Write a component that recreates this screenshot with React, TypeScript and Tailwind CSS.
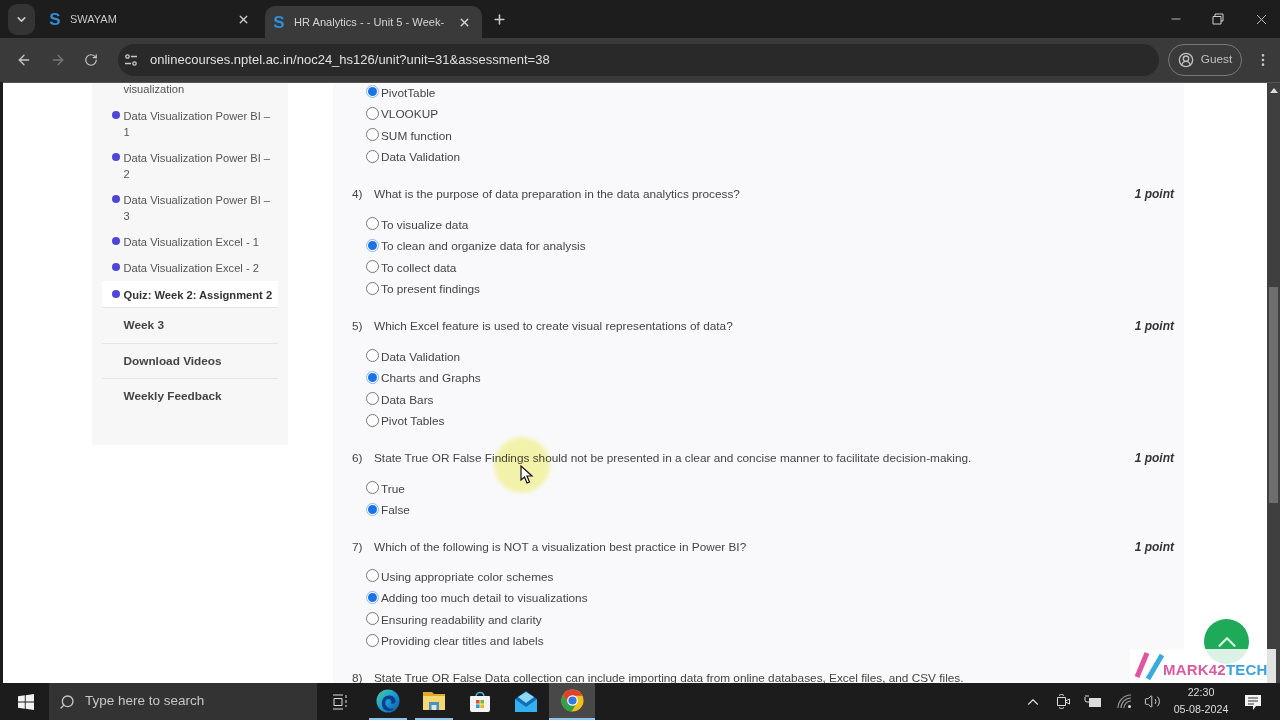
import React from 'react'
import { ChevronDown, X, Plus, ArrowLeft, ArrowRight, RotateCw, CircleUserRound, EllipsisVertical, Minus, ChevronUp, Search, Volume2 } from 'lucide-react'

const sans = 'font-["Liberation_Sans",Arial,sans-serif]'

function Radio({ checked }: { checked?: boolean }) {
  if (checked) {
    return (
      <span className="flex h-[13px] w-[13px] -translate-y-[2px] items-center justify-center rounded-full border border-[#8ab8ee] bg-white">
        <span className="h-[9px] w-[9px] rounded-full bg-[#1a73e8]" />
      </span>
    )
  }
  return <span className="h-[13px] w-[13px] -translate-y-[2px] rounded-full border border-[#767676] bg-white" />
}

function Question({ num, text, options, checked, last, tight }: { num?: number; text?: string; options: string[]; checked: number; last?: boolean; tight?: boolean }) {
  return (
    <div className="mb-[16px]">
      {num && (
        <div className={`flex h-[20px] items-center pl-[19px] pr-[10px] text-[#444] ${tight ? 'mb-[9px]' : 'mb-[10px]'}`}>
          <span className="w-[22px]">{num})</span>
          <span className="flex-1">{text}</span>
          {!last && <span className="-translate-y-[1px] text-[12px] font-bold italic text-[#333]">1 point</span>}
        </div>
      )}
      {options.map((o, i) => (
        <div key={o} className="flex h-[21.5px] items-center gap-[2px] pl-[33px] text-[#444]">
          <Radio checked={i === checked} />
          <span>{o}</span>
        </div>
      ))}
    </div>
  )
}

function Lesson({ lines, bold }: { lines: string[]; bold?: boolean }) {
  return (
    <div className={`relative leading-[16px] ${bold ? 'mx-[10px] bg-white pb-[4px] pl-[21.500px] pt-[6px] font-bold whitespace-nowrap text-[#333]' : 'py-[5px] pl-[31.500px] text-[#555]'}`}>
      <span className={`absolute h-[8px] w-[8px] rounded-full bg-[#4f46d8] ${bold ? 'left-[10px] top-[9px]' : 'left-[20px] top-[8px]'}`} />
      {lines.map((l) => (
        <div key={l}>{l}</div>
      ))}
    </div>
  )
}

function SwayamIcon() {
  return <span className="w-[16px] text-center font-['Liberation_Sans'] text-[17px] font-bold leading-none text-[#2f8fd8]">S</span>
}

function Edge() {
  return (
    <svg width="24" height="24" viewBox="0 0 24 24">
      <defs>
        <linearGradient id="edge" x1="0" y1="0" x2="1" y2="1">
          <stop offset="0" stopColor="#46cf9a" />
          <stop offset="0.5" stopColor="#1b9ad6" />
          <stop offset="1" stopColor="#0c56a8" />
        </linearGradient>
      </defs>
      <circle cx="12" cy="12" r="11.500" fill="url(#edge)" />
      <path d="M6 16C5 9 10 6 14 6.500c4 .5 6 3.500 5.500 6.500-.3 1.500-2.500 2-4.500 1.500 1-2 0-4.500-2.500-4.500-3 0-4 3.500-2.500 6.500 1.500 2.800 5 4 8.500 3-2.500 2.500-5.500 3-8 2C8 21 6.500 19 6 16z" fill="#0c3f88" />
    </svg>
  )
}

function Explorer() {
  return (
    <svg width="24" height="24" viewBox="0 0 24 24">
      <path d="M1 3h9l2 2h11v16H1z" fill="#dba92e" />
      <path d="M1 7h22v14H1z" fill="#f6d873" />
      <path d="M7 13h10v8H7z" fill="#4c8fb8" />
      <path d="M9.500 16h5v5h-5z" fill="#d5e7f2" />
    </svg>
  )
}

function Store() {
  return (
    <svg width="24" height="24" viewBox="0 0 24 24">
      <path d="M8 7c0-6 8-6 8 0" fill="none" stroke="#4aa8da" strokeWidth="1.600" />
      <path d="M3 6h18a1 1 0 0 1 1 1v13a2 2 0 0 1-2 2H4a2 2 0 0 1-2-2V7a1 1 0 0 1 1-1z" fill="#f2f4f6" />
      <path d="M8 10h3.600v3.600H8z" fill="#e2552d" />
      <path d="M12.400 10H16v3.600h-3.600z" fill="#7fb92d" />
      <path d="M8 14.400h3.600V18H8z" fill="#2b9fe0" />
      <path d="M12.400 14.400H16V18h-3.600z" fill="#f4b516" />
    </svg>
  )
}

function Mail() {
  return (
    <svg width="24" height="24" viewBox="0 0 24 24">
      <path d="M12 1l11 8v13H1V9z" fill="#0f6fb8" />
      <path d="M1 9l11 8 11-8v13H1z" fill="#35b0ee" />
      <path d="M4 7l8-5 8 5-8 6z" fill="#8fd8fa" />
    </svg>
  )
}

function Chrome() {
  return (
    <svg width="23" height="23" viewBox="0 0 24 24">
      <circle cx="12" cy="12" r="11.500" fill="#f2c118" />
      <path d="M12 .5A11.500 11.500 0 0 0 2 6.300L7.300 15 12 7h10A11.500 11.500 0 0 0 12 .5z" fill="#e0412f" />
      <path d="M2 6.300A11.500 11.500 0 0 0 11 23.500L16.200 15H7.500z" fill="#2fa04b" />
      <circle cx="12" cy="12" r="5.600" fill="#fff" />
      <circle cx="12" cy="12" r="4.300" fill="#3478e5" />
    </svg>
  )
}

export default function App() {
  return (
    <div className={`relative flex h-[720px] w-[1280px] flex-col overflow-hidden bg-white text-[11.800px] ${sans}`}>
      {/* tab strip */}
      <div className="flex h-[38px] items-center bg-[#1d1d1d] text-[11px] text-[#c8c8c8]">
        <div className="ml-[8px] flex h-[31px] w-[27px] items-center justify-center rounded-[9px] bg-[#343434]">
          <ChevronDown size={13} strokeWidth={3} />
        </div>
        <div className="flex h-[38px] w-[230px] items-center pl-[12px] pr-[15px]">
          <SwayamIcon />
          <span className="ml-[7px] flex-1">SWAYAM</span>
          <X size={13} strokeWidth={2.500} />
        </div>
        <div className="mt-[6px] flex h-[32px] w-[217px] items-center rounded-t-[10px] bg-[#3a3a3a] pl-[6px] pr-[11px] text-[#d4d4d4]">
          <SwayamIcon />
          <span className="ml-[7px] flex-1 whitespace-nowrap text-[11.100px]">HR Analytics - - Unit 5 - Week-</span>
          <X size={13} strokeWidth={2.500} />
        </div>
        <Plus size={15} strokeWidth={2.500} className="ml-[10px]" />
        <div className="ml-auto flex items-center gap-[29px] pr-[10px]">
          <Minus size={14} strokeWidth={1.500} />
          <svg width="12" height="12" viewBox="0 0 12 12" fill="none" stroke="#d0d0d0"><path d="M3 3V1h8v7H9" /><path d="M1 3.500h8v7.500H1z" /></svg>
          <X size={17} strokeWidth={1.300} />
        </div>
      </div>

      {/* toolbar */}
      <div className="flex h-[44px] items-center bg-[#3a3a3a] text-[#c8c8c8]">
        <ArrowLeft size={16} className="ml-[16px]" />
        <ArrowRight size={16} className="ml-[18px] text-[#777]" />
        <RotateCw size={14} className="ml-[18px]" />
        <div className="ml-[20px] flex h-[32px] w-[1041px] items-center rounded-full bg-[#292929] pl-[6px]">
          <svg width="14" height="14" viewBox="0 0 14 14" fill="none" stroke="#c8c8c8" strokeWidth="1.300">
            <circle cx="3.500" cy="3.500" r="1.700" /><path d="M7 3.500h6M1 10.500h6" /><circle cx="10.500" cy="10.500" r="1.700" />
          </svg>
          <span className="ml-[12px] text-[13px] text-[#e0e0e0]">onlinecourses.nptel.ac.in/noc24_hs126/unit?unit=31&amp;assessment=38</span>
        </div>
        <div className="ml-[9px] flex h-[32px] w-[74px] items-center justify-center gap-[7px] rounded-full border border-[#777] text-[#c0c0c0]">
          <CircleUserRound size={16} />
          <span>Guest</span>
        </div>
        <EllipsisVertical size={16} className="ml-[13px]" />
      </div>

      {/* page */}
      <div className="flex min-h-0 flex-1">
        <div className="w-[3px] bg-[#1d1d1d]" />
        <div className="flex min-w-0 flex-1 items-start overflow-hidden border-t border-[#555] bg-white">
          <aside className="ml-[89px] h-[362px] w-[196px] shrink-0 bg-[#f7f7f8] text-[11.150px]">
            <div className="mb-[8px] pl-[31.500px] leading-[12px] text-[#555]">visualization</div>
            <Lesson lines={['Data Visualization Power BI –', '1']} />
            <Lesson lines={['Data Visualization Power BI –', '2']} />
            <Lesson lines={['Data Visualization Power BI –', '3']} />
            <Lesson lines={['Data Visualization Excel - 1']} />
            <Lesson lines={['Data Visualization Excel - 2']} />
            <Lesson bold lines={['Quiz: Week 2: Assignment 2']} />
            <div className="mx-[10px] flex h-[36px] items-center border-t border-[#e5e5e5] pl-[21.500px] text-[11.800px] font-bold text-[#444]">Week 3</div>
            <div className="mx-[10px] flex h-[35px] items-center border-t border-[#e5e5e5] pl-[21.500px] pt-[2px] text-[11.800px] font-bold text-[#444]">Download Videos</div>
            <div className="mx-[10px] flex h-[35px] items-center border-t border-[#e5e5e5] pl-[21.500px] pt-[2px] text-[11.800px] font-bold text-[#444]">Weekly Feedback</div>
          </aside>
          <main className="ml-[45px] h-[600px] w-[851px] shrink-0 bg-[#f9f9fb]">
            <Question options={['PivotTable', 'VLOOKUP', 'SUM function', 'Data Validation']} checked={0} />
            <Question num={4} text="What is the purpose of data preparation in the data analytics process?" options={['To visualize data', 'To clean and organize data for analysis', 'To collect data', 'To present findings']} checked={1} />
            <Question num={5} text="Which Excel feature is used to create visual representations of data?" options={['Data Validation', 'Charts and Graphs', 'Data Bars', 'Pivot Tables']} checked={1} />
            <Question num={6} text="State True OR False Findings should not be presented in a clear and concise manner to facilitate decision-making." options={['True', 'False']} checked={1} />
            <Question num={7} tight text="Which of the following is NOT a visualization best practice in Power BI?" options={['Using appropriate color schemes', 'Adding too much detail to visualizations', 'Ensuring readability and clarity', 'Providing clear titles and labels']} checked={1} />
            <Question num={8} text="State True OR False Data collection can include importing data from online databases, Excel files, and CSV files." options={[]} checked={-1} last />
          </main>
          <div className="ml-auto flex h-full w-[13px] flex-col items-center bg-[#3f3f3f]">
            <div className="mt-[5px] h-0 w-0 border-x-[4px] border-b-[5px] border-x-transparent border-b-[#ddd]" />
            <div className="mt-[194px] h-[216px] w-[9px] bg-[#6e6e6e]" />
          </div>
        </div>
      </div>

      {/* taskbar */}
      <div className="flex h-[37px] items-center bg-[#1c1c1c] text-[#ddd]">
        <svg width="16" height="16" viewBox="0 0 16 16" fill="#f2f2f2" className="ml-[18px]"><path d="M0 2.300 6.800 1.300v6.300H0zM7.700 1.200 16 0v7.600H7.700zM0 8.400h6.800v6.300L0 13.700zM7.700 8.400H16V16l-8.300-1.200z" /></svg>
        <div className="ml-[15px] flex h-[37px] w-[268px] items-center bg-[#333] pl-[10px] text-[13.500px] text-[#c8c8c8]">
          <Search size={16} className="-scale-x-100" />
          <span className="ml-[10px] font-['Liberation_Sans']">Type here to search</span>
        </div>
        <svg width="16" height="16" viewBox="0 0 16 16" fill="none" stroke="#ddd" className="ml-[15px]"><path d="M1 1h10M1 15h10M2 4.500h8v7H2zM14 1v3M14 6v3M14 11v2" /></svg>
        <div className="ml-[17px] flex items-center">
          <div className="flex h-[37px] w-[46px] justify-center"><div className="flex h-[37px] w-[38px] items-center justify-center border-b-2 border-[#8cc4ee]"><Edge /></div></div>
          <div className="flex h-[37px] w-[46px] justify-center"><div className="flex h-[37px] w-[38px] items-center justify-center border-b-2 border-[#8cc4ee]"><Explorer /></div></div>
          <div className="flex h-[37px] w-[46px] items-center justify-center"><Store /></div>
          <div className="flex h-[37px] w-[46px] items-center justify-center"><Mail /></div>
          <div className="flex h-[37px] w-[46px] items-center justify-center border-b-2 border-[#8cc4ee] bg-[#484848]"><Chrome /></div>
        </div>
        <div className="ml-auto flex items-center">
          <ChevronUp size={18} strokeWidth={1.500} />
          <svg width="15" height="17" viewBox="0 0 15 17" fill="none" stroke="#ddd" className="ml-[13.500px]">
            <path d="M1.500 4.500h8v8h-8zM9.500 8l4-2v5l-4-2M3 2.500c1.500-1.300 3.500-1.300 5 0M3 14.500c1.500 1.300 3.500 1.300 5 0" />
          </svg>
          <svg width="18" height="14" viewBox="0 0 18 14" className="ml-[13.500px]">
            <path d="M5 3h12v9H5z" fill="#ddd" />
            <path d="M1 2v3a2 2 0 0 0 2 2h3M2 0v2M4 0v2" fill="none" stroke="#ddd" />
          </svg>
          <svg width="15" height="15" viewBox="0 0 15 15" fill="none" stroke="#999" strokeWidth="1.200" className="ml-[14.500px]">
            <path d="M1 14A13 13 0 0 1 14 1M4 14A10 10 0 0 1 14 4M7 14a7 7 0 0 1 7-7" />
            <circle cx="12.500" cy="12.500" r="1.500" fill="#ddd" stroke="none" />
          </svg>
          <Volume2 size={17} strokeWidth={1.300} className="ml-[12px]" />
          <div className="mb-[2px] ml-[10.500px] w-[60px] text-center text-[10.700px] leading-[17px]">
            <div>22:30</div>
            <div>05-08-2024</div>
          </div>
          <svg width="18" height="18" viewBox="0 0 18 18" className="ml-[13px] mr-[18px]">
            <path d="M1 2h16v11h-5l-3 4v-4H1z" fill="#f4f4f4" />
            <path d="M4 5h10M4 8h10M4 11h6" stroke="#333" />
          </svg>
        </div>
      </div>

      {/* cursor highlight */}
      <div className="absolute left-[494px] top-[437px] h-[56px] w-[56px] rounded-full bg-[#f8f8ae] mix-blend-multiply blur-[2px]" />
      <svg width="14" height="20" viewBox="0 0 14 20" className="absolute left-[520px] top-[465px]">
        <path d="M1 1v14l3.500-3 2.500 6 2.500-1-2.500-6H12z" fill="#fff" stroke="#111" strokeWidth="1.200" />
      </svg>

      {/* back to top */}
      <div className="absolute left-[1204px] top-[619px] flex h-[45px] w-[45px] items-center justify-center rounded-full bg-[#1faa59]">
        <ChevronUp size={30} strokeWidth={1.800} className="text-[#d8f0e0]" />
      </div>

      {/* watermark */}
      <div className="absolute left-[1130px] top-[649px] flex h-[34px] w-[146px] items-center overflow-hidden bg-white/85">
        <svg width="34" height="34" viewBox="0 0 34 34" className="shrink-0">
          <path d="M7 28 17 4" stroke="#e0559c" strokeWidth="5" />
          <path d="M18 30 32 6" stroke="#3aa9dc" strokeWidth="5" />
        </svg>
        <span className="mt-[7px] -ml-[1px] text-[15px] font-bold leading-none tracking-[0.2px]">
          <span className="text-[#d85ba0]">MARK42</span>
          <span className="text-[#37a3d8]">TECH</span>
        </span>
      </div>
    </div>
  )
}
